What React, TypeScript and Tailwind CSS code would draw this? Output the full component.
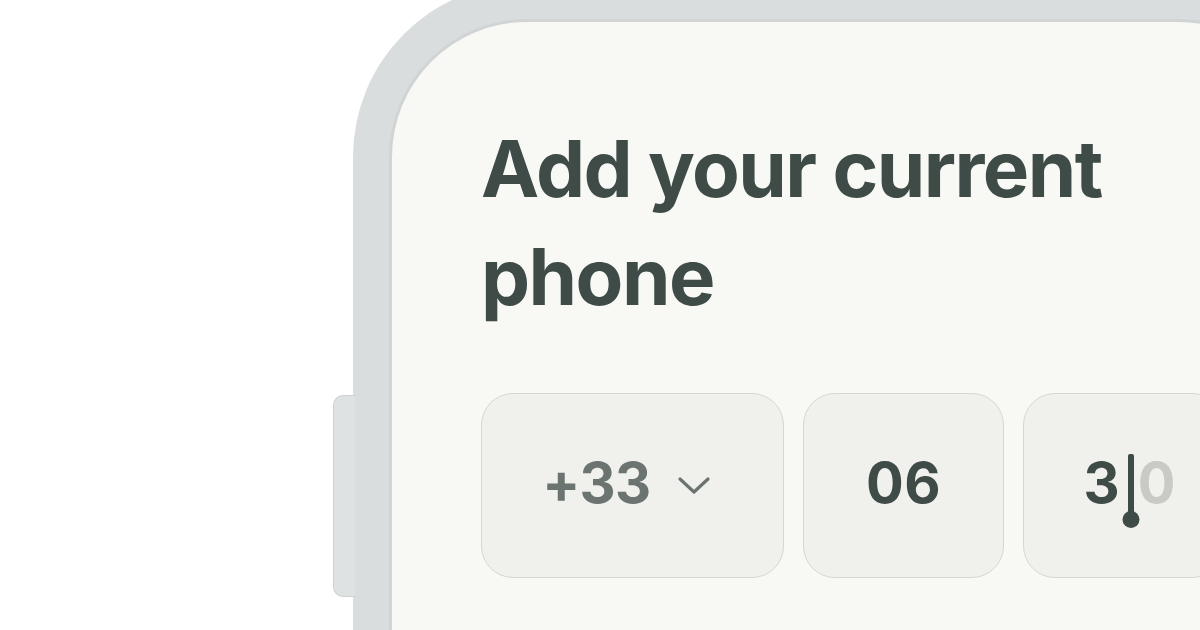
import React from "react";

const font = { fontFamily: "Inter, 'Noto Sans', sans-serif" };

export default function App() {
  return (
    <div className="w-[1200px] h-[630px] overflow-hidden bg-white" style={font}>
      <div className="relative ml-[353px] mt-[-17px] w-[1000px] h-[820px] rounded-[174px] bg-[#dadddd] p-[39px]">
        {/* side button */}
        <div className="absolute left-[-20px] top-[412px] w-[22px] h-[202px] rounded-l-[10px] bg-[#dfe2e2] border border-[#cdd2d2] border-r-0" />
        <div className="w-full h-full rounded-[135px] bg-[#f8f8f5] shadow-[0_0_0_3px_#d0d4d4] pl-[89px] pt-[93px]">
          <h1 className="text-[78px] leading-[108px] font-bold tracking-[-0.02em] text-[#3e4b47] w-[680px]">
            Add your current phone
          </h1>
          <div className="flex gap-[19px] mt-[62px]">
            <div className="w-[303px] h-[185px] shrink-0 rounded-[32px] bg-[#f0f0ed] border-[1.5px] border-[#d6d7d3] flex items-center justify-center gap-[26px] pb-[6px] pr-[12px]">
              <span className="text-[56px] font-bold tracking-[-0.01em] text-[#6b7470]">+33</span>
              <svg width="34" height="20" viewBox="0 0 34 20" fill="none" className="mt-[6px]">
                <path d="M3 3 L17 16 L31 3" stroke="#6b7470" strokeWidth="3.2" strokeLinecap="round" strokeLinejoin="round" />
              </svg>
            </div>
            <div className="w-[201px] h-[185px] shrink-0 rounded-[32px] bg-[#f0f0ed] border-[1.5px] border-[#d6d7d3] flex items-center justify-center pb-[6px]">
              <span className="text-[56px] font-bold tracking-[0.01em] text-[#3e4b47]">06</span>
            </div>
            <div className="w-[201px] h-[185px] shrink-0 rounded-[32px] bg-[#f0f0ed] border-[1.5px] border-[#d6d7d3] flex items-center justify-center pb-[6px] pl-[12px]">
              <span className="text-[56px] font-bold text-[#3e4b47]">3</span>
              <span className="relative w-[6px] h-[66px] bg-[#3e4b47] rounded-t-[2px] ml-[8px] mr-[4px] mt-[8px]">
                <span className="absolute left-1/2 -translate-x-1/2 bottom-[-8px] w-[17px] h-[17px] rounded-full bg-[#3e4b47]" />
              </span>
              <span className="text-[56px] font-bold text-[#c9cac5]">0</span>
            </div>
          </div>
        </div>
      </div>
    </div>
  );
}
